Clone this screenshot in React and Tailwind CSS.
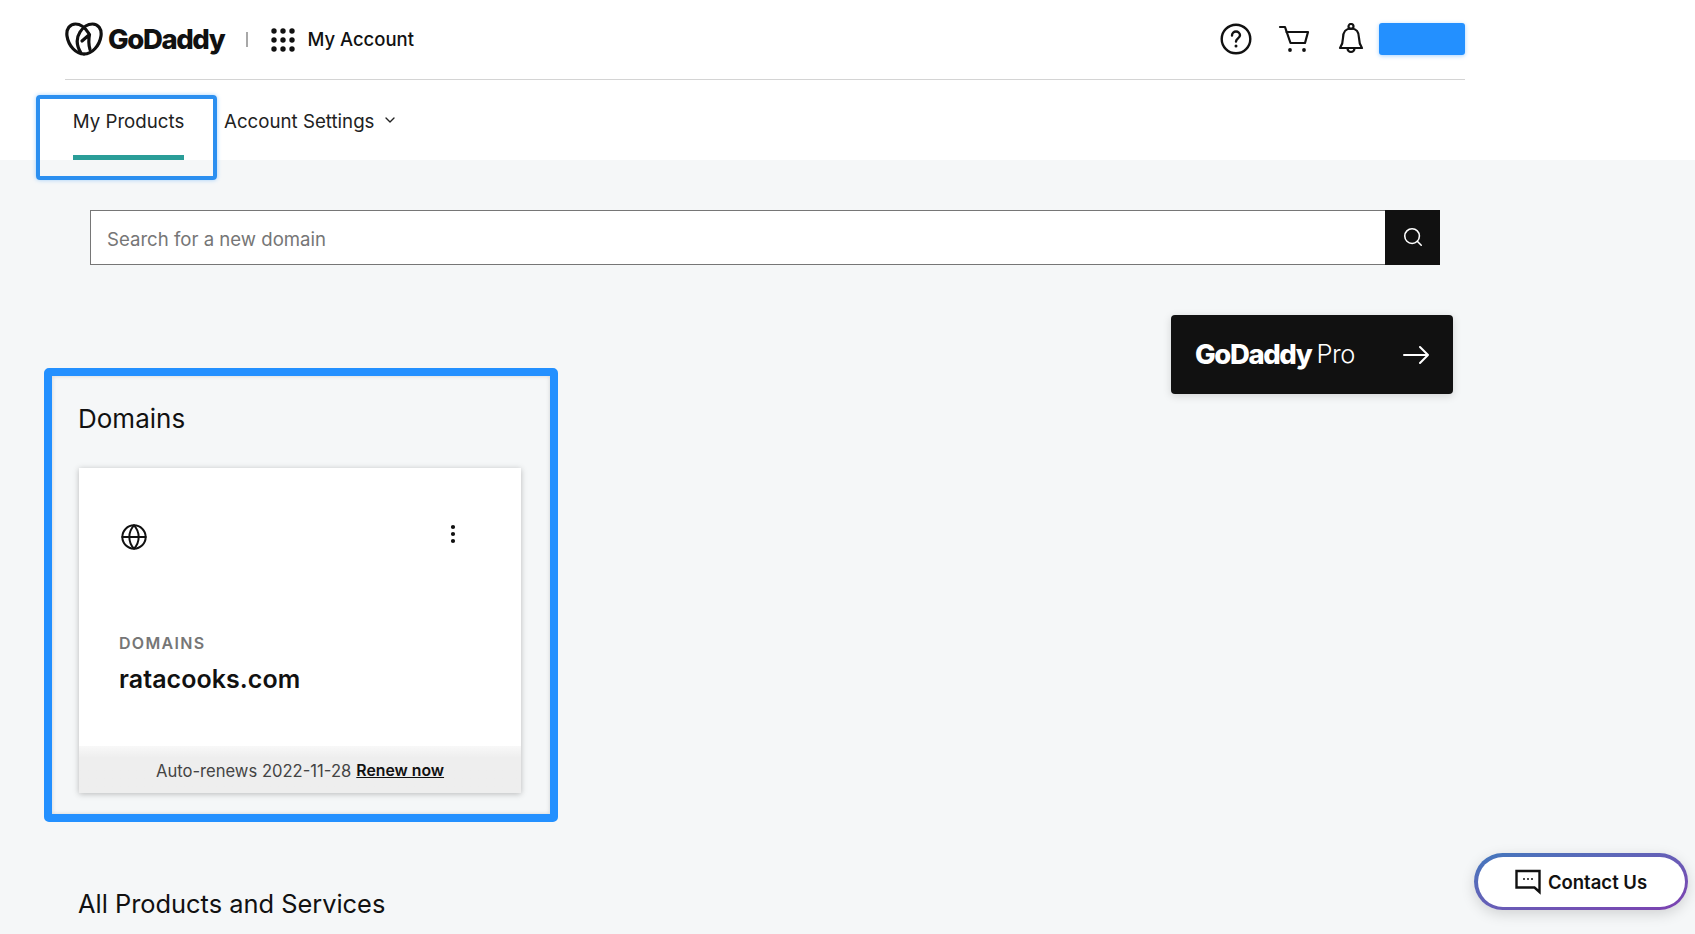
import { ChevronDown, Search, Globe, EllipsisVertical } from 'lucide-react'

const sans = "font-['Inter','Noto_Sans',sans-serif]"

function LogoMark({ className }) {
  return (
    <svg className={className} viewBox="0 0 38 34" fill="none" stroke="currentColor" strokeWidth="3.200" strokeLinecap="round" strokeLinejoin="round">
      <path d="M19 32C11 32 3.500 24 2 14 1 6.500 5 2 10.500 2c5 0 9.500 3.500 13 9" />
      <path d="M19 32c8 0 15.500-8 17-18 1-7.500-3-12-8.500-12C23 2 18.500 4.500 15 10c-3.500 5.500-4 13 1 21" />
      <path d="M17 19l7.500-6.500c-1 5-1 10 .5 15" />
    </svg>
  )
}

function GridIcon() {
  return (
    <svg className="w-[24px] h-[24px]" viewBox="0 0 24 24" fill="#111">
      {[3, 12, 21].map((y) =>
        [3, 12, 21].map((x) => <circle key={`${x}-${y}`} cx={x} cy={y} r="2.700" />)
      )}
    </svg>
  )
}

function HelpIcon() {
  return (
    <svg className="w-[32px] h-[32px]" viewBox="0 0 32 32" fill="none" stroke="#111" strokeWidth="2.400">
      <circle cx="16" cy="16" r="14.300" />
      <path strokeLinecap="round" d="M12 12.500c0-2.500 2-4 4-4s4 1.500 4 3.800c0 3-4 3.200-4 6.200" />
      <circle cx="16" cy="23" r="1.500" fill="#111" stroke="none" />
    </svg>
  )
}

function CartIcon() {
  return (
    <svg className="w-[32px] h-[28px]" viewBox="0 0 32 28" fill="none" stroke="#111" strokeWidth="2.200" strokeLinejoin="round" strokeLinecap="round">
      <path d="M2 2h5l5.500 16h14" />
      <path d="M8.500 7H30l-3 11" />
      <circle cx="12" cy="25" r="1.900" fill="#111" stroke="none" />
      <circle cx="26" cy="25" r="1.900" fill="#111" stroke="none" />
    </svg>
  )
}

function BellIcon() {
  return (
    <svg className="w-[26px] h-[32px]" viewBox="0 0 26 32" fill="none" stroke="#111" strokeWidth="2.200" strokeLinejoin="round">
      <circle cx="13" cy="3.500" r="2.500" />
      <path d="M2 25c2-3 3-5 3-10 0-6 3-9.500 8-9.500s8 3.500 8 9.500c0 5 1 7 3 10z" />
      <path d="M9.500 25.500a3.500 3.500 0 007 0" />
    </svg>
  )
}

function ChatIcon() {
  return (
    <svg className="w-[26px] h-[26px]" viewBox="0 0 26 26" fill="none" stroke="#111" strokeWidth="2.400">
      <path d="M1.500 2h23v21l-5-4.500h-18z" />
      <circle cx="9" cy="10" r="1" fill="#111" stroke="none" />
      <circle cx="13" cy="10" r="1" fill="#111" stroke="none" />
      <circle cx="17" cy="10" r="1" fill="#111" stroke="none" />
    </svg>
  )
}

function LongArrow() {
  return (
    <svg className="w-[26px] h-[20px]" viewBox="0 0 26 20" fill="none" stroke="#fff" strokeWidth="2" strokeLinecap="round" strokeLinejoin="round">
      <path d="M1 10h24M17 2l8 8-8 8" />
    </svg>
  )
}

export default function App() {
  return (
    <div className={`relative h-[934px] w-full overflow-hidden bg-[#f5f7f8] text-[#111] ${sans}`}>
      {/* Header */}
      <header className="bg-white h-[160px] pl-[65px]">
        <div className="w-[1400px] h-[80px] flex items-center border-b border-[#d4d4d4]">
          <LogoMark className="w-[38px] h-[34px] text-[#111] mr-[5px] mb-[2px]" />
          <span className="text-[27.5px] font-extrabold tracking-[-1.400px] leading-none">GoDaddy</span>
          <span className="ml-[22px] mr-[23px] w-[2px] h-[15px] bg-[#a8a8a8]" />
          <GridIcon />
          <span className="ml-[12px] text-[18.500px] font-medium">My Account</span>
          <div className="ml-auto flex items-center mb-[2px]">
            <HelpIcon />
            <span className="ml-[26px]"><CartIcon /></span>
            <span className="ml-[28px]"><BellIcon /></span>
            <button className="ml-[15px] w-[86px] h-[32px] rounded-[3px] bg-[#2390ff] shadow-[0_1px_4px_rgba(35,144,255,0.4)]" />
          </div>
        </div>
        <nav className="relative flex items-start text-[18.7px] h-[80px] text-[#222]">
          <div className="relative w-[111px] h-[80px] flex justify-center pt-[28px] ml-[8px] border-b-[5px] border-[#2a9d98] leading-[28px] whitespace-nowrap">
            My Products
            <div className="absolute left-[-37px] top-[15px] w-[181px] h-[85px] rounded-[4px] border-[4px] border-[#2b8ff0] shadow-[0_0_4px_rgba(35,144,255,0.4)]" />
          </div>
          <div className="ml-[40px] pt-[28px] flex items-center leading-[28px]">
            Account Settings
            <ChevronDown className="w-[16px] h-[16px] ml-[8px] mb-[5px]" strokeWidth={2} />
          </div>
        </nav>
      </header>

      {/* Search */}
      <div className="ml-[90px] mt-[50px] w-[1350px] h-[55px] flex">
        <div className="flex-1 bg-white border border-[#767676] border-r-0 flex items-center pl-[16px] pt-[4px] text-[18.6px] text-[#767676]">
          Search for a new domain
        </div>
        <div className="w-[55px] bg-[#111] flex items-center justify-center">
          <Search className="w-[22px] h-[22px] text-white mb-[2px]" strokeWidth={1.700} />
        </div>
      </div>

      {/* Pro banner */}
      <div className="ml-[1171px] mt-[50px] w-[282px] h-[79px] rounded-[4px] bg-[#111] text-white flex items-center pl-[24px] pr-[24px] shadow-[0_2px_8px_rgba(0,0,0,0.15)]">
        <span className="text-[27.5px] font-extrabold tracking-[-1.400px]">GoDaddy</span>
        <span className="ml-[5px] text-[25.500px] font-light tracking-[-0.500px]">Pro</span>
        <span className="ml-auto"><LongArrow /></span>
      </div>

      {/* Domains group */}
      <section className="ml-[44px] mt-[-26px] w-[514px] h-[454px] border-[8px] border-[#2390ff] rounded-[5px] pt-[26px] pl-[26px] pr-[29px] shadow-[inset_0_0_4px_rgba(0,0,0,0.15)]">
        <h2 className="text-[26px] leading-[34px]">Domains</h2>
        <div className="ml-[1px] mt-[32px] h-[325px] bg-white shadow-[0_1px_6px_rgba(0,0,0,0.25)] flex flex-col">
          <div className="flex-1 pl-[40px] pr-[56px]">
            <div className="flex justify-between pt-[54px]">
              <Globe className="w-[28px] h-[28px] ml-[1px] mt-[1px]" strokeWidth={1.700} />
              <EllipsisVertical className="w-[24px] h-[24px]" strokeWidth={2.200} />
            </div>
            <div className="mt-[82px] text-[16px] font-semibold tracking-[1.300px] text-[#767676] leading-[20px]">DOMAINS</div>
            <div className="mt-[10px] text-[25px] font-semibold leading-[32px] tracking-[0.050px]">ratacooks.com</div>
          </div>
          <div className="h-[47px] bg-[#eeeeee] bg-gradient-to-b from-[#f8f8f8] to-[#eeeeee] to-[25%] flex items-center justify-center pt-[3px] text-[16.600px] text-[#444]">
            Auto-renews 2022-11-28
            <a className="ml-[5px] text-[15.800px] font-semibold text-[#111] underline">Renew now</a>
          </div>
        </div>
      </section>

      <h2 className="ml-[78px] mt-[64px] text-[25.400px] leading-[36px]">All Products and Services</h2>

      {/* Contact pill */}
      <div className="absolute left-[1474px] top-[853px] w-[214px] h-[57px] rounded-full p-[3.500px] bg-gradient-to-br from-[#3f78bd] to-[#7c3fb0] shadow-[0_4px_14px_rgba(0,0,0,0.15)]">
        <div className="w-full h-full rounded-full bg-white flex items-center justify-center text-[18.500px] font-semibold">
          <ChatIcon />
          <span className="ml-[7px] mt-[3px]">Contact Us</span>
        </div>
      </div>
    </div>
  )
}
